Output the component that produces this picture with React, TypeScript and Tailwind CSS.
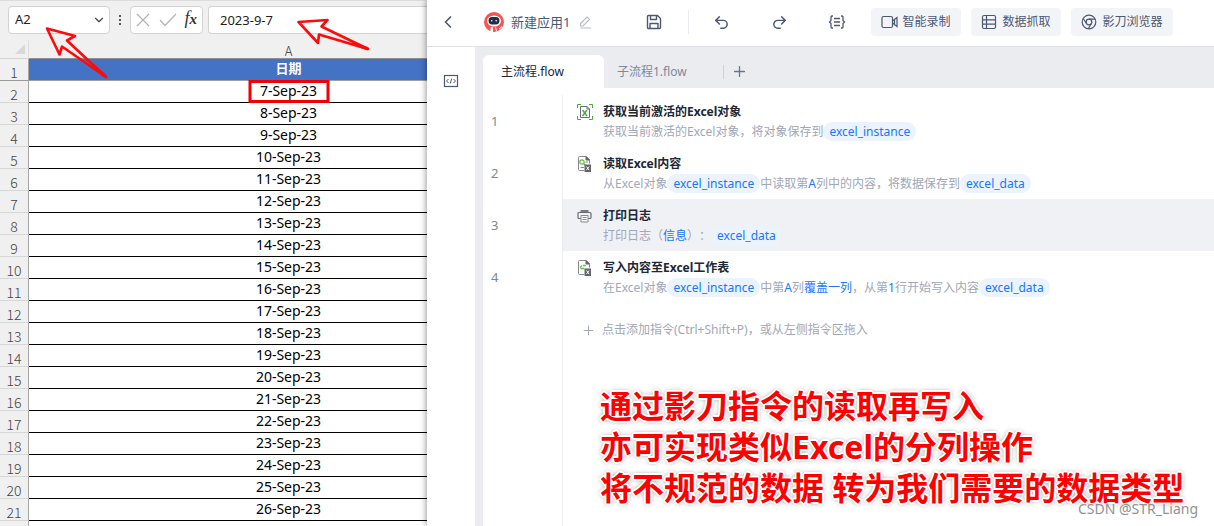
import React from "react";
import { ChevronDown, ChevronLeft, Plus, Redo2, Undo2 } from "lucide-react";

const dates = Array.from({ length: 20 }, (_, i) => `${i + 7}-Sep-23`);

function NameArrow() {
  return (
    <svg className="pointer-events-none absolute left-[40px] top-[20px]" width="76" height="64" viewBox="40 20 76 64" fill="none" stroke="#ff0a0a" strokeWidth="2.6" strokeLinejoin="round" aria-hidden="true">
      <path d="M47 28.500L75 36L67 40.500L106 77L62 46.500L59.500 54.500Z" />
      <path d="M92 65L105.500 76.500" strokeWidth="3.600" />
    </svg>
  );
}

function FormulaArrow() {
  return (
    <svg className="pointer-events-none absolute left-[290px] top-[12px]" width="86" height="44" viewBox="290 12 86 44" fill="none" stroke="#ff0a0a" strokeWidth="2.6" strokeLinejoin="round" aria-hidden="true">
      <path d="M298.500 22L327.500 20L321.500 26.500L368 49L319 34.500L318 43Z" />
      <path d="M354 43.500L368 49" strokeWidth="3.200" />
    </svg>
  );
}

function Spreadsheet() {
  return (
    <section className="relative min-w-0 overflow-hidden bg-white text-black">
      <div className="h-full">
        <div className="flex h-10 items-start gap-[5px] border-t border-[#dcdcdc] bg-[#f0f0f0] pl-2 pt-[5px] text-[13px] text-[#222]">
          <div className="flex h-7 w-[102px] shrink-0 items-center rounded border border-[#d2d2d2] bg-white pl-1.5">
            <input aria-label="Name box" defaultValue="A2" className="w-full min-w-0 bg-transparent outline-none" />
            <button aria-label="Open name list" className="px-[3px]"><ChevronDown size={14} strokeWidth={2} color="#444" /></button>
          </div>
          <svg width="10" height="28" viewBox="0 0 10 28" fill="#555" aria-hidden="true">
            <path d="M4 9h2v2H4zM4 13h2v2H4zM4 17h2v2H4z" />
          </svg>
          <div className="flex h-7 w-[73px] shrink-0 items-center justify-between rounded border border-[#d2d2d2] bg-white pl-1 pr-[5px]">
            <button aria-label="Cancel">
              <svg width="16" height="16" viewBox="0 0 16 16" fill="none" stroke="#b4b4b4" strokeWidth="1.200"><path d="M2 2l12 12M14 2L2 14" /></svg>
            </button>
            <button aria-label="Enter">
              <svg width="18" height="16" viewBox="0 0 18 16" fill="none" stroke="#b4b4b4" strokeWidth="1.200"><path d="M1 8l5 5.500L17 2" /></svg>
            </button>
            <button aria-label="Insert function" className="pb-0.5 font-['Liberation_Serif',serif] leading-5 text-[#333]">
              <i className="text-[18px]">f</i><i className="text-[15px] font-bold">x</i>
            </button>
          </div>
          <input aria-label="Formula bar" defaultValue="2023-9-7" className="h-7 min-w-0 flex-1 rounded-l border border-r-0 border-[#d2d2d2] bg-white pb-px pl-[11px] outline-none" />
        </div>

        <table className="w-[548px] table-fixed border-separate border-spacing-0">
          <colgroup>
            <col className="w-[29px]" />
            <col />
          </colgroup>
          <thead>
            <tr className="h-[19px] bg-[#f0f0f0]">
              <th aria-label="Select all" className="border-b border-r border-b-[#d4d4d4] border-r-[#ddd] p-0 align-bottom">
                <svg className="ml-[15px]" width="11" height="14" viewBox="0 0 11 14"><path d="M10 0v10H0z" fill="#d8d8d8" /></svg>
              </th>
              <th className="border-b border-[#8f8f8f] p-0 pt-1 font-['Noto_Sans_CJK_SC',sans-serif] text-[13px] leading-[14px] font-light text-[#333]">A</th>
            </tr>
          </thead>
          <tbody>
            <tr className="h-[22px]">
              <th className="border-b border-r border-b-[#999] border-r-[#a6a6a6] bg-[#f0f0f0] p-0 align-bottom font-['Noto_Sans_CJK_SC',sans-serif] text-[14px] leading-[16px] font-light text-[#444]">1</th>
              <th className="border-b border-[#a0a0a0] bg-[#4472c4] p-0 pb-0.5 text-[13px] leading-[19px] font-bold text-white">日期</th>
            </tr>
            {dates.map((date, i) => (
              <tr key={date} className="h-[22px]">
                <th className="border-b border-r border-b-[#d6d6d6] border-r-[#a6a6a6] bg-[#f0f0f0] p-0 align-bottom font-['Noto_Sans_CJK_SC',sans-serif] text-[14px] leading-[16px] font-light text-[#444]">{i + 2}</th>
                <td className="relative border-b border-black p-0 pb-0.5 text-center text-[14px] leading-[19px]">
                  {date}
                  {i === 0 && <span className="absolute inset-y-[-1px] left-1/2 w-[81px] -translate-x-1/2 border-3 border-[#f00000]" />}
                </td>
              </tr>
            ))}
            <tr className="h-[22px]">
              <th className="border-r border-[#a6a6a6] bg-[#f0f0f0] p-0" />
              <td className="p-0" />
            </tr>
          </tbody>
        </table>
      </div>
      <NameArrow />
      <FormulaArrow />
    </section>
  );
}

function RobotLogo() {
  return (
    <svg width="20" height="20" viewBox="0 0 20 20" aria-hidden="true">
      <circle cx="10" cy="10" r="10" fill="#fa5252" />
      <ellipse cx="10" cy="9" rx="7" ry="5.500" fill="#fff" />
      <rect x="4.500" y="5" width="11" height="7.500" rx="3.700" fill="#1f2d48" />
      <circle cx="7.800" cy="8.700" r=".8" fill="#fff" />
      <circle cx="12.200" cy="8.700" r=".8" fill="#fff" />
      <path d="M7 15.500h1.500V20H7zM11.500 15.500l1 3.500M15 17c1.500-.5 2.500-1.500 3-3" fill="#fff" stroke="#fff" />
    </svg>
  );
}

function Header() {
  return (
    <header className="flex h-[47px] shrink-0 items-center overflow-hidden border-b border-[#dfe0e5] bg-white pb-[2px] text-[#4b5873]">
      <button aria-label="Back" className="ml-[11px] shrink-0"><ChevronLeft size={20} strokeWidth={2} /></button>
      <div className="ml-[26px] flex shrink-0 items-center"><RobotLogo /></div>
      <h1 className="ml-[7px] shrink-0 text-[13px] leading-5">新建应用1</h1>
      <button aria-label="Rename" className="ml-2 shrink-0">
        <svg width="14" height="14" viewBox="0 0 14 14" fill="none" stroke="#b7bcc9" strokeWidth="1.100"><path d="M2.500 8.500L9 2l2.500 2.500L5 11H2.500zM2.500 13H13" /></svg>
      </button>
      <button aria-label="Save" className="ml-[54px] shrink-0">
        <svg width="16" height="16" viewBox="0 0 16 16" fill="none" stroke="currentColor" strokeWidth="1.400" strokeLinejoin="round"><path d="M2.500 1.500h9l3 3v9a1 1 0 0 1-1 1h-11a1 1 0 0 1-1-1v-11a1 1 0 0 1 1-1zM4.500 1.500v4h6v-4M4 14.500v-5h8v5" /></svg>
      </button>
      <span className="ml-[26px] h-6 w-px shrink-0 bg-[#e9eaee]" />
      <button aria-label="Undo" className="ml-6 shrink-0"><Undo2 size={17} strokeWidth={2.1} /></button>
      <button aria-label="Redo" className="ml-[41px] shrink-0"><Redo2 size={17} strokeWidth={2.1} /></button>
      <button aria-label="Variables" className="ml-10 shrink-0">
        <svg width="18" height="16" viewBox="0 0 18 16" fill="none" stroke="currentColor" strokeWidth="1.300"><path d="M5 2H4Q3 2 3 3v3.500L1.500 8 3 9.500V13q0 1 1 1h1M13 2h1q1 0 1 1v3.500L16.500 8 15 9.500V13q0 1-1 1h-1M6 4.500h6M6 8h6M6 11.500h6" /></svg>
      </button>
      <div className="ml-[25px] flex shrink-0 gap-2.5 text-[12px]">
        <button className="flex h-7 items-center gap-1 rounded bg-[#f3f4f8] pl-2.5 pr-[11px]">
          <svg width="17" height="16" viewBox="0 0 17 16" fill="none" stroke="currentColor" strokeWidth="1.200"><rect x="1" y="2.500" width="10.500" height="11" rx="1.500" /><path d="M11.500 7L16 3.500v9L11.500 9M13.500 6v4" /></svg>
          智能录制
        </button>
        <button className="flex h-7 items-center gap-1 rounded bg-[#f3f4f8] pl-2.5 pr-[11px]">
          <svg width="17" height="16" viewBox="0 0 17 16" fill="none" stroke="currentColor" strokeWidth="1.200"><rect x="1.500" y="1.500" width="13" height="13" rx="1.500" /><path d="M5.500 1.500v13M1.500 5.800h13M1.500 10.200h13" /></svg>
          数据抓取
        </button>
        <button className="flex h-7 items-center gap-1 rounded bg-[#f3f4f8] pl-2.5 pr-[11px]">
          <svg width="17" height="16" viewBox="0 0 17 16" fill="none" stroke="currentColor" strokeWidth="1.200"><circle cx="8" cy="8" r="6.800" /><circle cx="8" cy="8" r="2.800" /><path d="M8 5.200h6.200M5.500 9.300L2.200 4.500M10.300 9.500L7.300 14.700" /></svg>
          影刀浏览器
        </button>
      </div>
    </header>
  );
}

function Chip({ children }: { children: React.ReactNode }) {
  return <span className="inline-block h-[19px] rounded-full bg-[#ebf3ff] px-1.5 leading-[19px] text-[#1677ff]">{children}</span>;
}

function Value({ children }: { children: React.ReactNode }) {
  return <span className="text-[#1677ff]">{children}</span>;
}

function AttachIcon() {
  return (
    <svg width="16" height="16" viewBox="0 0 16 16" fill="none" aria-hidden="true">
      <path d="M.5 4V.5H4M12 .5h3.500V4M15.500 12v3.500H12M4 15.500H.5V12" stroke="#4ca845" />
      <path d="M10 2.500H3.500v11h9V5zM10 2.500V5h2.500" stroke="#68707d" />
      <path d="M5.500 6l4.500 6M10 6l-4.500 6" stroke="#4ca845" strokeWidth="1.500" />
    </svg>
  );
}

function SheetIcon({ read }: { read?: boolean }) {
  return (
    <svg width="16" height="16" viewBox="0 0 16 16" fill="none" aria-hidden="true">
      <path d="M7 14.500H2.500a1 1 0 0 1-1-1v-12a1 1 0 0 1 1-1H9L12.500 4v3.500" stroke="#85888f" />
      <path d="M9 .5L12.500 4H9z" fill="#62656c" stroke="#62656c" />
      {read ? (
        <>
          <circle cx="5" cy="6" r="2.200" stroke="#68bd45" strokeWidth="1.200" />
          <path d="M6.500 7.500L9 10" stroke="#68bd45" strokeWidth="1.200" />
          <path d="M8.500 6h2.500M3.500 11.500h3.500" stroke="#85888f" />
        </>
      ) : (
        <path d="M3 7.500L5 5.500M6 5.500h3M3.500 8.500h4" stroke="#68bd45" strokeWidth="1.300" />
      )}
      <path d="M7.500 8.500H14V16H7.500z" fill="#62656c" />
      <path d="M9.500 10.500l2.500 3.500M12 10.500L9.500 14" stroke="#fff" />
    </svg>
  );
}

function PrintIcon() {
  return (
    <svg width="16" height="16" viewBox="0 0 16 16" fill="none" aria-hidden="true">
      <path d="M3.500 2h8v2.500h-8z" fill="#777b84" />
      <path d="M4 10.500H2a1 1 0 0 1-1-1v-4a1 1 0 0 1 1-1h11a1 1 0 0 1 1 1v4a1 1 0 0 1-1 1h-2" stroke="#666b75" strokeWidth="1.200" />
      <path d="M4 7.500h7V14H4z" fill="#fff" stroke="#85888f" />
      <path d="M5.500 9.500h4M5.500 11.500h4" stroke="#ff625d" />
    </svg>
  );
}

const steps = [
  {
    title: "获取当前激活的Excel对象",
    icon: <AttachIcon />,
    detail: <>获取当前激活的Excel对象，将对象保存到<Chip>excel_instance</Chip></>,
  },
  {
    title: "读取Excel内容",
    icon: <SheetIcon read />,
    detail: <>从Excel对象<Chip>excel_instance</Chip>中读取第<Value>A</Value>列中的内容，将数据保存到<Chip>excel_data</Chip></>,
  },
  {
    title: "打印日志",
    icon: <PrintIcon />,
    detail: <>打印日志（<Value>信息</Value>）：<Chip>excel_data</Chip></>,
  },
  {
    title: "写入内容至Excel工作表",
    icon: <SheetIcon />,
    detail: <>在Excel对象<Chip>excel_instance</Chip>中第<Value>A</Value>列<Value>覆盖一列</Value>，从第<Value>1</Value>行开始写入内容<Chip>excel_data</Chip></>,
  },
];

function FlowEditor() {
  return (
    <main className="flex min-w-0 flex-1 flex-col bg-[#ebecf0] pl-2 pt-2">
      <nav className="flex h-[33px] shrink-0 text-[12px]">
        <button className="w-[121px] rounded-t-md bg-white pl-[18px] text-left text-[#202735]">主流程.flow</button>
        <button className="w-[119px] pl-[13px] text-left text-[#7c889e]">子流程1.flow</button>
        <span className="mt-2.5 h-3.5 w-px bg-[#cdd0d7]" />
        <button aria-label="Add flow" className="ml-[7px] text-[#69758a]"><Plus size={17} strokeWidth={1.8} /></button>
      </nav>
      <div className="flex flex-1 flex-col bg-white pt-[7px]">
        <ol>
          {steps.map((step, i) => (
            <li key={step.title} className="flex h-[52px]">
              <span className="w-[79px] shrink-0 pl-2 text-[13px] leading-[52px] text-[#7f8794]">{i + 1}</span>
              <div className={i === 2 ? "flex min-w-0 flex-1 border-l border-[#ebecf0] bg-[#f0f1f5] pl-3.5 pt-2" : "flex min-w-0 flex-1 border-l border-[#ebecf0] pl-3.5 pt-2"}>
                <span className="mr-2.5 w-4 shrink-0 pt-px">{step.icon}</span>
                <div className="whitespace-nowrap text-[12px]">
                  <h2 className="leading-[18px] font-bold text-[#202735]">{step.title}</h2>
                  <p className="leading-[22px] text-[#a0a7b8] [text-spacing-trim:space-all]">{step.detail}</p>
                </div>
              </div>
            </li>
          ))}
        </ol>
        <div className="ml-[79px] flex flex-1 flex-col border-l border-[#ebecf0] pl-[18px]">
          <button className="flex h-[54px] items-center gap-1.5 text-[12px] text-[#a0a7b8]">
            <Plus size={15} strokeWidth={1.6} />
            点击添加指令(Ctrl+Shift+P)，或从左侧指令区拖入
          </button>
          <p className="mt-7 ml-[19px] whitespace-nowrap text-[32px] leading-[41px] font-bold text-[#ff0000] [text-shadow:2px_0_0_white,-2px_0_0_white,0_2px_0_white,0_-2px_0_white,1px_1px_0_white,-1px_1px_0_white,1px_-1px_0_white,-1px_-1px_0_white,0_0_5px_#555]">
            通过影刀指令的读取再写入<br />亦可实现类似Excel的分列操作<br />将不规范的数据 转为我们需要的数据类型
          </p>
        </div>
      </div>
    </main>
  );
}

export default function App() {
  return (
    <div className="relative grid h-screen min-h-[526px] grid-cols-[427fr_787fr] overflow-hidden font-['Noto_Sans','Noto_Sans_CJK_SC',sans-serif]">
      <Spreadsheet />
      <section className="relative flex min-w-0 flex-col bg-white shadow-[0_0_7px_rgba(0,0,0,0.5)]">
        <Header />
        <div className="flex flex-1">
          <aside className="w-12 shrink-0 bg-white pl-4 pt-[23px]">
            <button aria-label="Code" className="text-[#4b5873]">
              <svg width="16" height="14" viewBox="0 0 16 14" fill="none" stroke="currentColor"><rect x="1.500" y="1.500" width="13" height="11" strokeWidth="1.200" /><path d="M5.500 5L3.500 7l2 2M10.500 5l2 2-2 2M8.700 4.500l-1.400 5" /></svg>
            </button>
          </aside>
          <FlowEditor />
        </div>
      </section>
      <span className="absolute bottom-[7px] right-4 text-[14px] leading-5 text-[#929292]">CSDN @STR_Liang</span>
    </div>
  );
}
